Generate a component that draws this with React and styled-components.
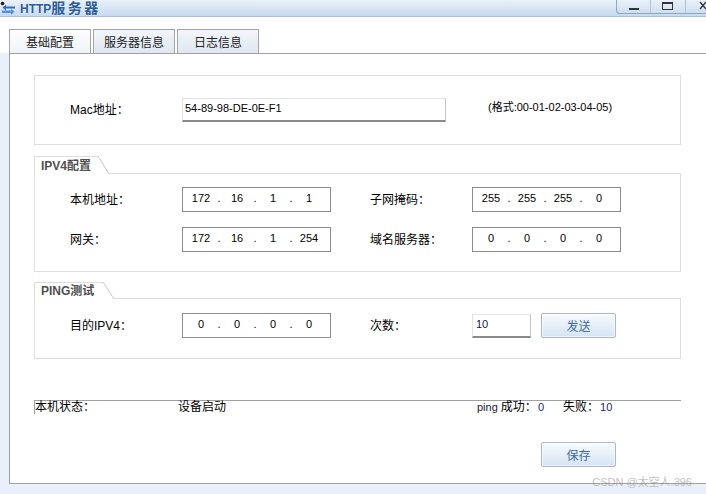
import React from 'react';
import styled, { createGlobalStyle } from 'styled-components';

const FONT = '"Liberation Sans", "Noto Sans CJK SC", sans-serif';

const Global = createGlobalStyle`
  html, body { margin: 0; padding: 0; }
  body {
    width: 706px; height: 494px; overflow: hidden;
    background: #e9f0fb;
    font-family: ${FONT};
  }
`;

const Window = styled.div`
  position: relative;
  width: 706px; height: 494px;
  display: flex; flex-direction: column;
  background: #e9f0fb;
  overflow: hidden;
`;

const TitleBar = styled.div`
  height: 17px; box-sizing: border-box;
  display: flex; align-items: flex-start;
  background: linear-gradient(#e9f1fa, #c8daee);
  border-bottom: 1px solid #a8c0dc;
`;

const TitleIcon = styled.svg`
  flex: none;
  margin: 1px 3px 0 0;
`;

const TitleText = styled.div`
  font: bold 12px ${FONT};
  line-height: 16px;
  color: #2a5b9f;
  white-space: nowrap;
  text-shadow: 0 0 2px rgba(255,255,255,0.8);
`;

const TitleCJK = styled.span`
  font-size: 14px;
  letter-spacing: 2.5px;
`;

const Controls = styled.div`
  margin-left: auto;
  align-self: flex-start;
  width: 90px; height: 14px; box-sizing: border-box;
  display: flex; overflow: hidden;
  border-left: 1px solid #8ea4bf;
  border-bottom: 1px solid #8ea4bf;
  border-bottom-left-radius: 4px;
`;

const Ctl = styled.div`
  flex: none;
  width: ${p => p.$w}px;
  display: flex; align-items: center; justify-content: center;
  & + & { border-left: 1px solid #b3c3d6; }
`;

const TabStrip = styled.div`
  height: 36px; box-sizing: border-box;
  background: #fff;
  padding: 12px 0 0 9px;
  display: flex; align-items: flex-end; gap: 2px;
`;

const Tab = styled.div`
  box-sizing: border-box;
  width: ${p => p.$w}px; height: 24px;
  border: 1px solid #a3a3a3; border-bottom: none;
  background: ${p => p.$active
    ? 'linear-gradient(#fdfefe, #eef3f9)'
    : 'linear-gradient(#f3f6fa, #dfe7f1)'};
  display: flex; align-items: center; justify-content: center;
  font: 12px "Noto Sans CJK SC", sans-serif;
  color: #222;
`;

const Panel = styled.div`
  margin-left: 9px;
  height: 431px; box-sizing: border-box;
  background: #fff;
  border: 1px solid #a0a0a0; border-right: none;
  padding: 21px 0 0 24px;
  display: flex; flex-direction: column; align-items: flex-start;
`;

const MacBox = styled.div`
  box-sizing: border-box;
  width: 647px; height: 70px;
  border: 1px solid #dedede;
  display: flex; align-items: center;
  padding-left: 35px;
`;

const Label = styled.div`
  flex: none;
  width: ${p => (p.$w ? `${p.$w}px` : 'auto')};
  font-size: 12px; line-height: 14px;
  color: #000;
  white-space: nowrap;
`;

const Hint = styled.div`
  margin-left: 42px;
  margin-top: -6px;
  font-size: 11px; line-height: 14px;
  color: #000;
  white-space: nowrap;
`;

const TextInput = styled.div`
  flex: none;
  box-sizing: border-box;
  width: ${p => p.$w}px; height: 24px;
  border-top: 1px solid #e4e4e4;
  border-left: 1px solid #e4e4e4;
  border-right: 1px solid #c4c4c4;
  border-bottom: 2px solid #8a8a8a;
  padding: 2px 0 0 ${p => p.$pl}px;
  font-size: 11px; line-height: 14px;
  color: ${p => p.$color || '#000'};
  background: #fff;
  white-space: nowrap;
`;

const Section = styled.div`
  margin-top: ${p => p.$mt}px;
  display: flex; flex-direction: column;
  width: 647px;
`;

const SectionHead = styled.div`
  display: flex;
  height: ${p => p.$h}px;
`;

const HeadLabel = styled.div`
  border-top: 1px solid #dcdcdc;
  border-left: 1px solid #dcdcdc;
  padding: 0 ${p => p.$pr}px 1px 6px;
  display: flex; align-items: flex-end;
  font-weight: bold; font-size: 12px; line-height: 14px;
  color: #505050;
  white-space: nowrap;
`;

const HeadSlant = styled.div`
  flex: none;
  width: 11px;
  background: linear-gradient(to top right,
    transparent calc(50% - 0.8px),
    #d4d4d4 calc(50% - 0.3px),
    #d4d4d4 calc(50% + 0.3px),
    transparent calc(50% + 0.8px));
`;

const HeadFill = styled.div`
  flex: 1;
  border-bottom: 1px solid #dcdcdc;
`;

const SectionBody = styled.div`
  box-sizing: border-box;
  border: 1px solid #dedede; border-top: none;
  padding: ${p => p.$pt}px 0 ${p => p.$pb}px 35px;
  display: grid;
  grid-template-columns: 112px 188px 102px auto;
  row-gap: 15px;
  align-items: center;
`;

const IpField = styled.div`
  box-sizing: border-box;
  width: 149px; height: 25px;
  border: 1px solid #8c8c8c;
  padding: 3px 0 0 3px;
  display: flex;
  font-size: 11px; line-height: 14px;
  color: #000;
  background: #fff;
`;

const Seg = styled.span`
  width: 30px; text-align: center;
`;

const Dot = styled.span`
  width: 6px; text-align: center;
`;

const Inline = styled.div`
  display: flex; align-items: center; gap: 10px;
`;

const Btn = styled.button`
  box-sizing: border-box;
  width: 75px; height: 25px;
  border: 1px solid #a9b7c9;
  border-radius: 2px;
  background: linear-gradient(#f8fbfe, #d5e3f2);
  box-shadow: inset 0 0 0 1px rgba(255,255,255,0.6);
  color: #3b6aa6;
  font: 12px "Noto Sans CJK SC", sans-serif;
  padding: 0;
`;

const Status = styled.div`
  margin-top: 41px;
  box-sizing: border-box;
  width: 647px; height: 14px;
  border-top: 1px solid #a0a0a0;
  border-left: 1px solid #a0a0a0;
  display: grid;
  grid-template-columns: 143px 299px auto;
  font-size: 12px; line-height: 13px;
  color: #000;
  white-space: nowrap;
`;

const Small = styled.span`
  font-size: 11px;
  color: #1a1a3a;
`;

const Num = styled.span`
  font-size: 11px;
  color: #1a1a8c;
  margin-left: ${p => p.$ml || 0}px;
`;

const Gap = styled.span`
  display: inline-block;
  width: ${p => p.$w}px;
`;

const SaveRow = styled.div`
  margin-top: 28px;
  padding-left: 507px;
  display: flex;
`;

const Watermark = styled.div`
  position: absolute;
  right: 14px; bottom: 6px;
  font-size: 11px; line-height: 12px;
  color: rgba(140, 140, 140, 0.55);
  white-space: nowrap;
`;

function Ip({ parts }) {
  return (
    <IpField>
      {parts.map((p, i) => (
        <React.Fragment key={i}>
          {i > 0 && <Dot>.</Dot>}
          <Seg>{p}</Seg>
        </React.Fragment>
      ))}
    </IpField>
  );
}

export default function App() {
  return (
    <Window>
      <Global />
      <TitleBar>
        <TitleIcon width="17" height="15" viewBox="0 0 17 15">
          <circle cx="2.5" cy="2.5" r="1.8" fill="#1a1a1a" />
          <path d="M15 5.5 H6 V3.5 L2.5 6.5 L6 9.5 V7.5 H15 Z" fill="#2f6fc6" />
          <path d="M2 9.5 H11 V7.8 L14.5 10.8 L11 13.8 V12 H2 Z" fill="#4f93de" />
        </TitleIcon>
        <TitleText>HTTP<TitleCJK>服务器</TitleCJK></TitleText>
        <Controls>
          <Ctl $w={33}>
            <svg width="12" height="12" viewBox="0 0 12 12">
              <rect x="1" y="7" width="10" height="2" fill="#333" />
            </svg>
          </Ctl>
          <Ctl $w={34}>
            <svg width="12" height="12" viewBox="0 0 12 12">
              <rect x="0.5" y="1.5" width="10" height="7" fill="none" stroke="#333" strokeWidth="1" />
              <rect x="0.5" y="1" width="10" height="2" fill="#333" />
            </svg>
          </Ctl>
          <Ctl $w={34}>
            <svg width="12" height="12" viewBox="0 0 12 12">
              <path d="M3 1 L9 8 M9 1 L3 8" stroke="#333" strokeWidth="1.3" />
            </svg>
          </Ctl>
        </Controls>
      </TitleBar>

      <TabStrip>
        <Tab $w={82} $active>基础配置</Tab>
        <Tab $w={82}>服务器信息</Tab>
        <Tab $w={82}>日志信息</Tab>
      </TabStrip>

      <Panel>
        <MacBox>
          <Label $w={112}>Mac地址：</Label>
          <TextInput $w={264} $pl={2}>54-89-98-DE-0E-F1</TextInput>
          <Hint>(格式:00-01-02-03-04-05)</Hint>
        </MacBox>

        <Section $mt={11}>
          <SectionHead $h={18}>
            <HeadLabel $pr={7}>IPV4配置</HeadLabel>
            <HeadSlant />
            <HeadFill />
          </SectionHead>
          <SectionBody $pt={13} $pb={19}>
            <Label>本机地址：</Label>
            <Ip parts={['172', '16', '1', '1']} />
            <Label>子网掩码：</Label>
            <Ip parts={['255', '255', '255', '0']} />
            <Label>网关：</Label>
            <Ip parts={['172', '16', '1', '254']} />
            <Label>域名服务器：</Label>
            <Ip parts={['0', '0', '0', '0']} />
          </SectionBody>
        </Section>

        <Section $mt={10}>
          <SectionHead $h={17}>
            <HeadLabel $pr={9}>PING测试</HeadLabel>
            <HeadSlant />
            <HeadFill />
          </SectionHead>
          <SectionBody $pt={14} $pb={20}>
            <Label>目的IPV4：</Label>
            <Ip parts={['0', '0', '0', '0']} />
            <Label>次数：</Label>
            <Inline>
              <TextInput $w={59} $pl={3} $color="#14145a">10</TextInput>
              <Btn>发送</Btn>
            </Inline>
          </SectionBody>
        </Section>

        <Status>
          <span>本机状态：</span>
          <span>设备启动</span>
          <span>
            <Small>ping </Small>成功：<Num $ml={1}>0</Num>
            <Gap $w={19} />失败：<Num $ml={1}>10</Num>
          </span>
        </Status>

        <SaveRow>
          <Btn>保存</Btn>
        </SaveRow>
      </Panel>

      <Watermark>CSDN @太空人.396</Watermark>
    </Window>
  );
}
